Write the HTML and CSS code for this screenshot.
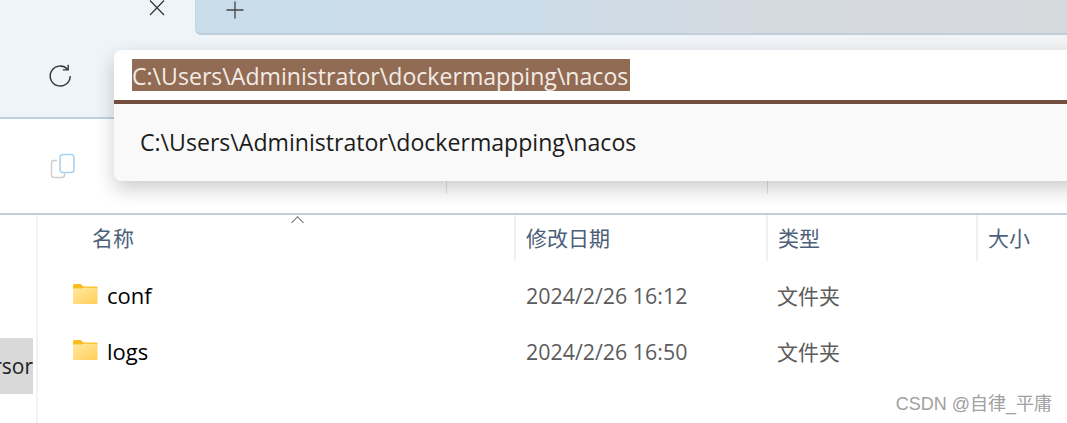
FILE: index.html
```html
<!DOCTYPE html>
<html lang="zh-CN">
<head>
  <meta charset="utf-8">
  <meta name="viewport" content="width=device-width, initial-scale=1">
  <title>nacos</title>
  <link rel="stylesheet" href="styles.css">
</head>
<body>

<div class="window">
  <div class="tabstrip">
    <div class="tab-close">
      <svg width="16" height="16" viewBox="0 0 16 16"><path d="M1 0.5 15 15M15 0.5 1 15" fill="none" stroke="#333" stroke-width="1.2"/></svg>
    </div>
    <div class="tab-new">
      <svg width="18" height="18" viewBox="0 0 18 18"><path d="M9 0.5V17.5M0.5 9H17.5" fill="none" stroke="#444" stroke-width="1.3"/></svg>
    </div>
  </div>

  <div class="toolbar">
    <div class="reload">
      <svg width="24" height="24" viewBox="0 0 24 24"><path d="M19.5 5.2A10 10 0 1 0 22.2 12" fill="none" stroke="#333" stroke-width="1.4"/><path d="M20.2 0.8V5.9H14.8" fill="none" stroke="#333" stroke-width="1.4"/></svg>
    </div>
  </div>

  <div class="ribbon">
    <div class="copy-icon">
      <svg width="26" height="26" viewBox="0 0 26 26"><path d="M7 7.500H4A2.500 2.500 0 0 0 1.500 10V22A2.500 2.500 0 0 0 4 24.500H12A2.500 2.500 0 0 0 14.500 22V20" fill="none" stroke="#cfcfcf" stroke-width="1.500"/><rect x="10" y="1.500" width="14" height="18" rx="3" fill="#fff" stroke="#a9d3f2" stroke-width="1.600"/></svg>
    </div>
    <span class="rib-sep sep-a"></span>
    <span class="rib-sep sep-b"></span>
  </div>

  <div class="content">
    <aside class="sidebar">
      <div class="side-item">rsor</div>
    </aside>
    <div class="files">
      <div class="file-head">
        <div class="col col-name">名称<span class="sort-arrow"></span></div>
        <div class="col">修改日期</div>
        <div class="col">类型</div>
        <div class="col">大小</div>
      </div>
      <div class="file-list">
        <div class="file-row">
          <div class="file-name">
            <svg class="folder" width="26" height="22" viewBox="0 0 26 22">
              <defs>
                <linearGradient id="folder-fill" x1="0" y1="0" x2="1" y2="1">
                  <stop offset="0" stop-color="#ffe8a6"/>
                  <stop offset="1" stop-color="#ffcf55"/>
                </linearGradient>
              </defs>
              <path d="M1 2.500A1.500 1.500 0 0 1 2.500 1H8.500L11.500 3.500H24.500A1 1 0 0 1 25.500 4.500V6H1Z" fill="#fdbb22"/>
              <path d="M1 5.500H9.500L11.500 4.700H25.500V20A1 1 0 0 1 24.500 21H2A1 1 0 0 1 1 20Z" fill="url(#folder-fill)"/>
            </svg>
            conf
          </div>
          <div class="file-date">2024/2/26 16:12</div>
          <div class="file-type">文件夹</div>
        </div>
        <div class="file-row">
          <div class="file-name">
            <svg class="folder" width="26" height="22" viewBox="0 0 26 22">
              <path d="M1 2.500A1.500 1.500 0 0 1 2.500 1H8.500L11.500 3.500H24.500A1 1 0 0 1 25.500 4.500V6H1Z" fill="#fdbb22"/>
              <path d="M1 5.500H9.500L11.500 4.700H25.500V20A1 1 0 0 1 24.500 21H2A1 1 0 0 1 1 20Z" fill="url(#folder-fill)"/>
            </svg>
            logs
          </div>
          <div class="file-date">2024/2/26 16:50</div>
          <div class="file-type">文件夹</div>
        </div>
      </div>
    </div>
  </div>

  <!-- address bar dropdown sits over toolbar and ribbon -->
  <div class="address">
    <div class="address-input"><span class="selected">C:\Users\Administrator\dockermapping\nacos</span></div>
    <div class="address-suggest">C:\Users\Administrator\dockermapping\nacos</div>
  </div>

  <div class="watermark">CSDN @自律_平庸</div>
</div>

</body>
</html>
```

FILE: styles.css
```css
html, body {margin: 0; padding: 0;}
body {background: #fff; font-family: "Open Sans", "Noto Sans CJK SC", sans-serif; overflow: hidden;}

.window {position: relative; width: 1067px; height: 423px; overflow: hidden;}

.tabstrip {display: flex; height: 36px; background: #eff4f9;}
.tab-close {width: 195px; height: 16px; box-sizing: border-box; display: flex; justify-content: flex-end; padding-right: 30px;}
.tab-new {flex: 1; height: 35px; padding: 1px 0 0 30px; box-sizing: border-box; border-bottom: 2px solid #c0ced9; border-left: 1px solid #c3d6e4; border-bottom-left-radius: 6px; background: linear-gradient(90deg, #c9dce9 0%, #cadce9 35%, #d5dae0 65%, #d6d9dc 100%);}

.toolbar {height: 83px; box-sizing: border-box; background: linear-gradient(90deg, #eff4f9 0%, #eff4f9 50%, #f1f3f5 100%); border-bottom: 2px solid #bed2e0; padding: 28px 0 0 48px;}
.reload {width: 24px; height: 24px;}

.ribbon {position: relative; height: 96px; box-sizing: border-box; padding: 34px 0 0 50px; border-bottom: 2px solid #c3ced8;}
.copy-icon {width: 26px; height: 26px;}
.rib-sep {position: absolute; top: 60px; width: 1px; height: 15px; background: #e2e2e2;}
.sep-a {left: 446px;}
.sep-b {left: 767px;}

.content {display: flex; height: 208px;}
.sidebar {width: 38px; box-sizing: border-box; border-right: 2px solid #f3f3f3; padding-top: 123px; overflow: hidden; flex: none;}
.side-item {width: 33px; height: 56px; background: #d9d9d9; font-size: 21px; line-height: 56px; color: #222; display: flex; justify-content: flex-end; overflow: hidden;}

.files {flex: 1;}
.file-head {display: grid; grid-template-columns: 478px 252px 210px 1fr; height: 46px;}
.col {position: relative; padding: 4px 0 0 10px; font-size: 21px; line-height: 38px; color: #4c6079; border-right: 2px solid #f0f0f0; box-sizing: border-box;}
.col:last-child {border-right: 0;}
.col-name {padding-left: 54px;}
.sort-arrow {position: absolute; left: 255px; top: 3px; width: 8px; height: 8px; border-top: 1px solid #666; border-left: 1px solid #666; transform: rotate(45deg);}

.file-list {padding-top: 6px;}
.file-row {display: grid; grid-template-columns: 478px 252px 210px 1fr; height: 56px; align-items: center; color: #5c5c5c; font-size: 21px;}
.file-name {display: flex; align-items: center; gap: 9px; padding-left: 34px; color: #000; font-size: 22px;}
.folder {margin-bottom: 2px;}
.file-date {padding-left: 10px; font-size: 21.4px;}
.file-type {padding-left: 9px;}

.address {position: absolute; left: 114px; top: 50px; right: -20px; height: 131px; border-radius: 8px; box-shadow: 0 8px 20px rgba(0,0,0,.2);}
.address-input {height: 50px; box-sizing: border-box; background: #fff; border-radius: 8px 8px 0 0; padding: 9px 0 0 18px; font-size: 23.1px;}
.selected {display: inline-block; height: 32px; line-height: 34px; padding-right: 2px; background: #916b53; color: #f3ebe5; white-space: nowrap;}
.address-suggest {height: 81px; box-sizing: border-box; background: #f9f9f9; border-top: 4px solid #724e3e; border-radius: 0 0 8px 8px; padding: 21px 0 0 26px; font-size: 23.1px; line-height: 35px; color: #1c1c1c;}

.watermark {position: absolute; right: 15px; bottom: 8px; font-family: "Liberation Sans", "Noto Sans CJK SC", sans-serif; font-size: 18px; line-height: 22px; color: #a0a0a0;}
```
